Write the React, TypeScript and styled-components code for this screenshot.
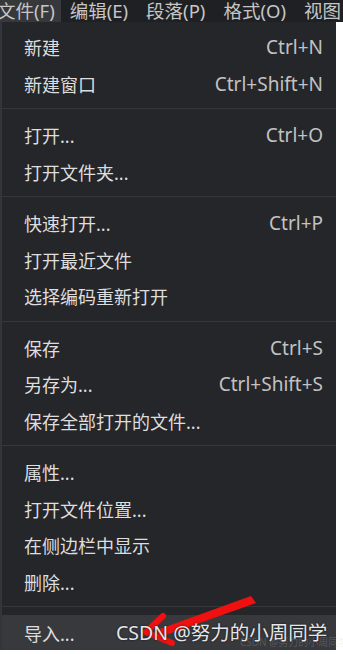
import React from 'react';
import styled, {createGlobalStyle} from 'styled-components';

const GlobalStyle = createGlobalStyle`
  html, body {
    margin: 0;
    padding: 0;
    background: #ffffff;
  }
  body {
    font-family: "Noto Sans", "Noto Sans CJK SC", sans-serif;
  }
`;

const Screen = styled.div`
  position: relative;
  width: 343px;
  height: 654px;
  overflow: hidden;
  background: #ffffff;
`;

const MenuBar = styled.div`
  display: flex;
  height: 22px;
  background: #1f2023;
  overflow: hidden;
`;

const BarItem = styled.div<{active?: boolean; offset?: number}>`
  display: flex;
  align-items: center;
  flex-shrink: 0;
  height: 22px;
  padding: 0 ${p => (p.active ? 6 : 9)}px;
  margin-left: ${p => p.offset ?? 0}px;
  background: ${p => (p.active ? '#37383c' : 'transparent')};
  color: #c6c6c6;
  font-size: 18.5px;
  line-height: 22px;
  white-space: nowrap;
`;

const Panel = styled.div`
  width: 336px;
  height: 628px;
  padding-top: 7px;
  box-sizing: border-box;
  background: #25262a;
  border-left: 2px solid #34353a;
  overflow: hidden;
`;

const Row = styled.div<{hover?: boolean}>`
  display: flex;
  align-items: center;
  justify-content: space-between;
  height: 36.5px;
  padding: 0 13px 0 22px;
  background: ${p => (p.hover ? '#38393d' : 'transparent')};
`;

const Label = styled.span`
  color: #dedede;
  font-size: 18px;
  white-space: nowrap;
`;

const Shortcut = styled.span`
  color: #c2c2c2;
  font-size: 19px;
  white-space: nowrap;
`;

const Separator = styled.div`
  height: 1px;
  margin: 6px 0 8px;
  background: #36373b;
`;

const Watermark = styled.div`
  position: absolute;
  left: 116px;
  top: 620px;
  color: #e6e6e6;
  font-size: 19.5px;
  line-height: 26px;
  white-space: nowrap;
  text-shadow: 0 0 2px rgba(0, 0, 0, 0.8);
`;

const FaintMark = styled.div`
  position: absolute;
  left: 240px;
  top: 634px;
  color: rgba(200, 200, 200, 0.22);
  font-size: 10px;
  white-space: nowrap;
`;

const Arrow = styled.svg`
  position: absolute;
  left: 0;
  top: 0;
  pointer-events: none;
`;

type Item = {label: string; keys?: string; hover?: boolean};

const groups: Item[][] = [
  [
    {label: '新建', keys: 'Ctrl+N'},
    {label: '新建窗口', keys: 'Ctrl+Shift+N'},
  ],
  [
    {label: '打开...', keys: 'Ctrl+O'},
    {label: '打开文件夹...'},
  ],
  [
    {label: '快速打开...', keys: 'Ctrl+P'},
    {label: '打开最近文件'},
    {label: '选择编码重新打开'},
  ],
  [
    {label: '保存', keys: 'Ctrl+S'},
    {label: '另存为...', keys: 'Ctrl+Shift+S'},
    {label: '保存全部打开的文件...'},
  ],
  [
    {label: '属性...'},
    {label: '打开文件位置...'},
    {label: '在侧边栏中显示'},
    {label: '删除...'},
  ],
  [{label: '导入...', hover: true}],
];

export default function App() {
  return (
    <Screen>
      <GlobalStyle />
      <MenuBar>
        <BarItem active offset={-9}>文件(F)</BarItem>
        <BarItem>编辑(E)</BarItem>
        <BarItem>段落(P)</BarItem>
        <BarItem>格式(O)</BarItem>
        <BarItem>视图</BarItem>
      </MenuBar>
      <Panel>
        {groups.map((group, gi) => (
          <React.Fragment key={gi}>
            {gi > 0 && <Separator />}
            {group.map(item => (
              <Row key={item.label} hover={item.hover}>
                <Label>{item.label}</Label>
                {item.keys && <Shortcut>{item.keys}</Shortcut>}
              </Row>
            ))}
          </React.Fragment>
        ))}
      </Panel>
      <FaintMark>CSDN @努力的小周同学</FaintMark>
      <Arrow width="343" height="654" viewBox="0 0 343 654">
        <path d="M251 596 L256 603 L160 637 L157 630 Z" fill="#f01010" />
        <path
          d="M146 632 L163 616 M146 632 L172 643"
          stroke="#f01010"
          strokeWidth="6"
          strokeLinecap="round"
          fill="none"
        />
      </Arrow>
      <Watermark>CSDN @努力的小周同学</Watermark>
    </Screen>
  );
}
